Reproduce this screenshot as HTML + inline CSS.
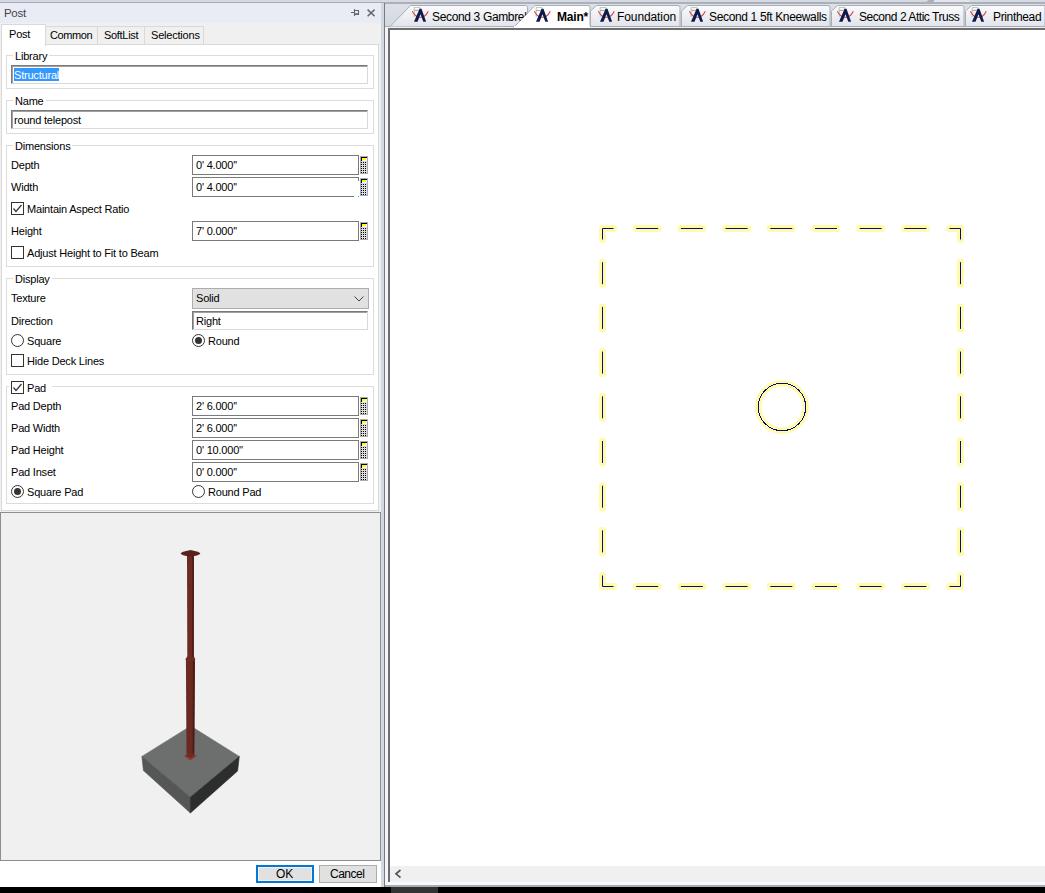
<!DOCTYPE html>
<html><head><meta charset="utf-8">
<style>
*{box-sizing:border-box;margin:0;padding:0}
html,body{width:1045px;height:893px;overflow:hidden;background:#D5D9E2;font-family:"Liberation Sans",sans-serif;font-size:11px;letter-spacing:-0.2px;color:#000}
.a{position:absolute}
.lbl{position:absolute;white-space:nowrap;line-height:15px}
.grp{position:absolute;border:1px solid #DCDCDC}
.gt{position:absolute;background:#fff;padding:0 2px 0 2px;line-height:15px;white-space:nowrap}
.inp{position:absolute;background:#fff;border:1px solid #7A7A7A;border-right-color:#D9D9D9;border-bottom-color:#D9D9D9;box-shadow:inset 1px 1px 0 #A0A0A0}
.inp2{position:absolute;background:#fff;border:1px solid #7A7A7A}
.txt{position:absolute;white-space:nowrap;line-height:15px}
.chk{position:absolute;width:13px;height:13px;border:1px solid #333;background:#fff}
.rad{position:absolute;width:13px;height:13px;border:1px solid #333;border-radius:50%;background:#fff}
.calc{position:absolute;width:8px;height:18px}
.tab{position:absolute;font-size:12px;letter-spacing:-0.35px;white-space:nowrap;line-height:14px}
</style></head><body>
<svg width="0" height="0" style="position:absolute"><defs><symbol id="calc" viewBox="0 0 8 18" width="8" height="18">
<rect x="0.5" y="0.5" width="7" height="17" fill="#DCDCDC" stroke="#ABABAB"/>
<rect x="1" y="1" width="6" height="1" fill="#000"/><rect x="1" y="1" width="1" height="4" fill="#000"/>
<rect x="2" y="2" width="4" height="2" fill="#FFFF00"/><rect x="6" y="2" width="1" height="3" fill="#F4F4F4"/><rect x="2" y="4" width="4" height="1" fill="#F4F4F4"/>
<g fill="#000"><rect x="1" y="6" width="1" height="1"/><rect x="3" y="6" width="1" height="1"/><rect x="5" y="6" width="1" height="1"/>
<rect x="1" y="8" width="1" height="1"/><rect x="3" y="8" width="1" height="1"/><rect x="5" y="8" width="1" height="1"/>
<rect x="1" y="10" width="1" height="1"/><rect x="3" y="10" width="1" height="1"/><rect x="5" y="10" width="1" height="1"/>
<rect x="1" y="12" width="1" height="1"/><rect x="3" y="12" width="1" height="1"/><rect x="5" y="12" width="1" height="1"/>
<rect x="1" y="14" width="1" height="1"/><rect x="3" y="14" width="1" height="1"/><rect x="5" y="14" width="1" height="1"/>
<rect x="1" y="16" width="1" height="1"/><rect x="3" y="16" width="1" height="1"/><rect x="5" y="16" width="1" height="1"/></g>
</symbol></defs></svg>
<!-- top strip -->
<div class="a" style="left:0;top:2px;width:1045px;height:1px;background:#A8ACB5"></div>

<svg class="a" style="left:920px;top:0" width="60" height="3"><polygon points="5,3 9,0 15,0 12,3" fill="#A9ADB5"/><rect x="14" y="0" width="36" height="2" fill="#E2E5EB"/></svg>
<!-- LEFT PANEL -->
<div class="a" style="left:0;top:3px;width:381px;height:20px;background:#E9ECF5"></div>
<div class="lbl" style="left:4px;top:6px;font-size:11.5px;letter-spacing:-0.3px;color:#444;line-height:15px">Post</div>
<!-- pin & close -->
<svg class="a" style="left:348px;top:7px" width="30" height="12" viewBox="0 0 30 12">
  <g stroke="#666" stroke-width="1.2" fill="none">
    <path d="M3 5.5 H6.5 M6.5 2 V9 M6.5 3.5 H10.5 V7.5 H6.5 M6.5 6.8 H10.5" stroke-width="1.1"/>
    <path d="M19.6 2.6 L26.6 9.2 M26.6 2.6 L19.6 9.2" stroke-width="1.5"/>
  </g>
</svg>
<div class="a" style="left:0;top:23px;width:381px;height:489px;background:#F0F0F0"></div>

<!-- property tabs -->
<div class="a" style="left:45px;top:26px;width:53px;height:19px;background:#F0F0F0;border:1px solid #D9D9D9"></div>
<div class="a" style="left:97px;top:26px;width:48px;height:19px;background:#F0F0F0;border:1px solid #D9D9D9"></div>
<div class="a" style="left:144px;top:26px;width:60px;height:19px;background:#F0F0F0;border:1px solid #D9D9D9"></div>
<div class="a" style="left:1px;top:44px;width:378px;height:467px;background:#fff;border:1px solid #D9D9D9"></div>
<div class="a" style="left:1px;top:24px;width:45px;height:22px;background:#fff;border:1px solid #D9D9D9;border-bottom:none"></div>
<div class="lbl" style="left:9px;top:27px">Post</div>
<div class="lbl" style="left:50px;top:28px;letter-spacing:-0.4px">Common</div>
<div class="lbl" style="left:104px;top:28px;letter-spacing:-0.3px">SoftList</div>
<div class="lbl" style="left:151px;top:28px">Selections</div>

<!-- Library -->
<div class="grp" style="left:6px;top:55px;width:368px;height:34px"></div>
<div class="gt" style="left:13px;top:49px">Library</div>
<div class="inp" style="left:11px;top:65px;width:357px;height:19px"></div>
<div class="a" style="left:14px;top:68px;width:45px;height:13px;background:#3399FF"></div>
<div class="txt" style="left:14px;top:68px;color:#fff">Structural</div>

<!-- Name -->
<div class="grp" style="left:6px;top:100px;width:368px;height:34px"></div>
<div class="gt" style="left:13px;top:94px">Name</div>
<div class="inp" style="left:11px;top:110px;width:357px;height:19px"></div>
<div class="txt" style="left:14px;top:113px">round telepost</div>

<!-- Dimensions -->
<div class="grp" style="left:6px;top:145px;width:368px;height:122px"></div>
<div class="gt" style="left:13px;top:139px">Dimensions</div>
<div class="lbl" style="left:11px;top:158px">Depth</div>
<div class="inp2" style="left:192px;top:155px;width:167px;height:20px"></div>
<div class="txt" style="left:196px;top:158px">0' 4.000''</div>
<div class="lbl" style="left:11px;top:180px">Width</div>
<div class="inp2" style="left:192px;top:177px;width:167px;height:20px"></div>
<div class="txt" style="left:196px;top:180px">0' 4.000''</div>
<div class="chk" style="left:11px;top:202px"></div>
<svg class="a" style="left:11px;top:202px" width="13" height="13"><path d="M2.5 6.5 L5 9.5 L10.5 3" stroke="#333" stroke-width="1.2" fill="none"/></svg>
<div class="lbl" style="left:27px;top:202px">Maintain Aspect Ratio</div>
<div class="lbl" style="left:11px;top:224px">Height</div>
<div class="inp2" style="left:192px;top:221px;width:167px;height:20px"></div>
<div class="txt" style="left:196px;top:224px">7' 0.000''</div>
<div class="chk" style="left:11px;top:246px"></div>
<div class="lbl" style="left:27px;top:246px">Adjust Height to Fit to Beam</div>

<!-- Display -->
<div class="grp" style="left:6px;top:278px;width:368px;height:97px"></div>
<div class="gt" style="left:13px;top:272px">Display</div>
<div class="lbl" style="left:11px;top:291px">Texture</div>
<div class="a" style="left:192px;top:288px;width:177px;height:21px;background:#E1E1E1;border:1px solid #ADADAD"></div>
<div class="txt" style="left:196px;top:291px">Solid</div>
<svg class="a" style="left:354px;top:296px" width="10" height="6"><path d="M0.5 0.5 L5 5 L9.5 0.5" stroke="#444" fill="none"/></svg>
<div class="lbl" style="left:11px;top:314px">Direction</div>
<div class="inp" style="left:192px;top:311px;width:176px;height:19px"></div>
<div class="txt" style="left:196px;top:314px">Right</div>
<div class="rad" style="left:11px;top:334px"></div>
<div class="lbl" style="left:27px;top:334px">Square</div>
<div class="rad" style="left:192px;top:334px"></div>
<div class="a" style="left:195px;top:337px;width:7px;height:7px;border-radius:50%;background:#333"></div>
<div class="lbl" style="left:208px;top:334px">Round</div>
<div class="chk" style="left:11px;top:354px"></div>
<div class="lbl" style="left:27px;top:354px">Hide Deck Lines</div>

<!-- Pad -->
<div class="grp" style="left:6px;top:386px;width:368px;height:118px"></div>
<div class="gt" style="left:9px;top:380px;width:43px;height:14px"></div>
<div class="chk" style="left:11px;top:381px"></div>
<svg class="a" style="left:11px;top:381px" width="13" height="13"><path d="M2.5 6.5 L5 9.5 L10.5 3" stroke="#333" stroke-width="1.2" fill="none"/></svg>
<div class="lbl" style="left:27px;top:381px">Pad</div>
<div class="lbl" style="left:11px;top:399px">Pad Depth</div>
<div class="inp2" style="left:192px;top:396px;width:167px;height:20px"></div>
<div class="txt" style="left:196px;top:399px">2' 6.000''</div>
<div class="lbl" style="left:11px;top:421px">Pad Width</div>
<div class="inp2" style="left:192px;top:418px;width:167px;height:20px"></div>
<div class="txt" style="left:196px;top:421px">2' 6.000''</div>
<div class="lbl" style="left:11px;top:443px">Pad Height</div>
<div class="inp2" style="left:192px;top:440px;width:167px;height:20px"></div>
<div class="txt" style="left:196px;top:443px">0' 10.000''</div>
<div class="lbl" style="left:11px;top:465px">Pad Inset</div>
<div class="inp2" style="left:192px;top:462px;width:167px;height:20px"></div>
<div class="txt" style="left:196px;top:465px">0' 0.000''</div>
<div class="rad" style="left:11px;top:485px"></div>
<div class="a" style="left:14px;top:488px;width:7px;height:7px;border-radius:50%;background:#333"></div>
<div class="lbl" style="left:27px;top:485px">Square Pad</div>
<div class="rad" style="left:192px;top:485px"></div>
<div class="lbl" style="left:208px;top:485px">Round Pad</div>

<svg class="a" style="left:360px;top:156px" width="8" height="18"><use href="#calc"/></svg>
<svg class="a" style="left:360px;top:178px" width="8" height="18"><use href="#calc"/></svg>
<div class="a" style="left:358px;top:181px;width:1px;height:15px;background:#fff"></div>
<div class="a" style="left:354px;top:196px;width:4px;height:1px;background:#fff"></div>
<svg class="a" style="left:360px;top:178px" width="8" height="18"><rect x="0.5" y="0.5" width="7" height="17" fill="none" stroke="#9DB0C4"/></svg>
<svg class="a" style="left:360px;top:222px" width="8" height="18"><use href="#calc"/></svg>
<svg class="a" style="left:360px;top:397px" width="8" height="18"><use href="#calc"/></svg>
<svg class="a" style="left:360px;top:419px" width="8" height="18"><use href="#calc"/></svg>
<svg class="a" style="left:360px;top:441px" width="8" height="18"><use href="#calc"/></svg>
<svg class="a" style="left:360px;top:463px" width="8" height="18"><use href="#calc"/></svg>
<!-- preview -->
<div class="a" style="left:0;top:512px;width:381px;height:349px;background:#F0F0F0;border:1px solid #8E8E8E"></div>
<svg class="a" style="left:0;top:500px" width="380" height="360" viewBox="0 500 380 360">
  <polygon points="190.7,726 239.3,756.4 190.4,797.2 141.9,756.4" fill="#6D6E6E" stroke="#6D6E6E" stroke-width="0.6"/>
  <polygon points="141.9,756.4 190.4,797.2 190.4,813 143.4,770.5" fill="#555656" stroke="#555656" stroke-width="0.6"/>
  <polygon points="190.4,797.2 239.3,756.4 237.6,771 190.4,813" fill="#2C2D2D" stroke="#2C2D2D" stroke-width="0.6"/>
  <!-- lower tube -->
  <polygon points="185.9,658 194.9,658 194.2,755.5 186.5,755.5" fill="#6A2921"/>
  <polygon points="192.9,658 194.9,658 194.2,755.5 192.6,755.5" fill="#4B1C17"/>
  <polygon points="185.6,659.5 187,656.5 194,656.5 195.2,659.5 194.6,661 186.2,661" fill="#6E2B23"/>
  <!-- upper tube -->
  <polygon points="187,555 193.9,555 193.8,657 187.3,657" fill="#6C2A22"/>
  <polygon points="192.2,555 193.9,555 193.8,657 192.2,657" fill="#4C1D18"/>
  <!-- top plate -->
  <path d="M180.6 553.6 Q180.8 552 190.5 550.1 Q200.2 552 200.3 553.6 Q200 555.3 190.5 556.8 Q181 555.3 180.6 553.6 Z" fill="#5A221B"/>
  <!-- base plate -->
  <polygon points="184,756 187,754.3 194,754.3 196.7,756 190.3,760.6" fill="#8B3B30"/>
  <polygon points="186.5,754.5 194.2,754.5 194.2,756 190.3,758 186.5,756" fill="#6A2921"/>
</svg>
<div class="a" style="left:0;top:861px;width:381px;height:26px;background:#fff"></div>
<div class="a" style="left:256px;top:865px;width:58px;height:18px;background:#E1E1E1;border:2px solid #0078D7;box-shadow:inset 0 0 0 1px #F5F0EC"></div>
<div class="tab" style="left:276px;top:867px;letter-spacing:0">OK</div>
<div class="a" style="left:319px;top:865px;width:58px;height:18px;background:#E1E1E1;border:1px solid #ADADAD"></div>
<div class="tab" style="left:330px;top:867px;letter-spacing:-0.5px">Cancel</div>

<!-- splitter -->
<div class="a" style="left:381px;top:3px;width:3px;height:884px;background:#D3D7E0"></div>
<div class="a" style="left:384px;top:3px;width:1px;height:884px;background:#7A7A7A"></div>
<div class="a" style="left:385px;top:3px;width:3px;height:884px;background:#F2F5FC"></div>

<!-- RIGHT DOC -->
<div class="a" style="left:388px;top:28px;width:657px;height:858px;background:#fff;border-left:2px solid #6E6E6E;border-top:2px solid #6E6E6E"></div>
<div class="a" style="left:390px;top:866px;width:655px;height:16px;background:#F0F0F0"></div>
<svg class="a" style="left:394px;top:869px" width="9" height="10"><path d="M6.5 1 L2 4.8 L6.5 8.6" stroke="#555" stroke-width="1.7" fill="none"/></svg>
<div class="a" style="left:388px;top:882px;width:657px;height:3px;background:#F8F9FC"></div>
<div class="a" style="left:385px;top:885px;width:660px;height:2px;background:#A8ACB5"></div>

<!-- TAB STRIP -->
<svg class="a" style="left:0;top:0" width="1045" height="30" viewBox="0 0 1045 30">
  <defs>
    <linearGradient id="tg" x1="0" y1="0" x2="0" y2="1">
      <stop offset="0" stop-color="#FBFBFC"/>
      <stop offset="1" stop-color="#E1E4EB"/>
    </linearGradient>
    <symbol id="ic" viewBox="0 0 18 16" width="18" height="16">
      <path d="M2.2 10 V0.4 H7.9 V3" fill="none" stroke="#A3CBA3" stroke-width="0.9"/>
      <path d="M2.4 3.4 H7.5" stroke="#D98088" stroke-width="0.9"/>
      <path d="M0.3 4.2 Q2 8 5.2 9.8 M16.3 4.2 Q14.6 8 11.6 9.8 M5.2 10.3 H11.6" stroke="#D84550" stroke-width="1.1" fill="none"/>
      <path d="M2 14.8 L7.6 1.7 L9.5 1.7 L14.1 14.8 L11.3 14.8 L8.5 7.2 L5.5 14.8 Z" fill="#0D1A4C"/>
    </symbol>
  </defs>
  <linearGradient id="sg" x1="0" y1="0" x2="0" y2="1"><stop offset="0" stop-color="#DDE0E8"/><stop offset="1" stop-color="#D4D8E1"/></linearGradient>
  <rect x="385" y="3" width="660" height="24" fill="url(#sg)"/>
  <rect x="385" y="2" width="660" height="2" fill="#ACB0B9"/>
  <rect x="385" y="26" width="660" height="1" fill="#A9ADB5"/>
  <rect x="388" y="27" width="657" height="1" fill="#EEF0F4"/>
  <!-- inactive tabs (right to left) -->
  <path d="M965.5 26 V11 L971.5 5.5 H1045 V26" fill="url(#tg)" stroke="#A9ADB5"/>
  <path d="M831.5 26 V11 L837.5 5.5 H962 Q964 5.5 964 7.5 V26" fill="url(#tg)" stroke="#A9ADB5"/>
  <path d="M681.5 26 V11 L687.5 5.5 H828 Q830 5.5 830 7.5 V26" fill="url(#tg)" stroke="#A9ADB5"/>
  <path d="M590.5 26 V11 L596.5 5.5 H678 Q680 5.5 680 7.5 V26" fill="url(#tg)" stroke="#A9ADB5"/>
  <path d="M390 26.5 L410.5 5.5 H525.5 Q527.5 5.5 527.5 7.5 V26" fill="url(#tg)" stroke="#A9ADB5"/>
  <!-- selected -->
  <path d="M513.5 27.5 L535 5.5 H588 Q590 5.5 590 7.5 V27.5" fill="#fff" stroke="#A9ADB5"/>
  <rect x="514" y="26" width="76" height="2" fill="#fff"/>
  <use href="#ic" x="412" y="7"/>
  <use href="#ic" x="534" y="7"/>
  <use href="#ic" x="598" y="7"/>
  <use href="#ic" x="689" y="7"/>
  <use href="#ic" x="837" y="7"/>
  <use href="#ic" x="970" y="7"/>
</svg>
<div class="tab" style="left:432px;top:10px;width:110px;height:16px;clip-path:polygon(0 0,99px 0,83px 16px,0 16px)">Second 3 Gambrel</div>
<div class="tab" style="left:557px;top:10px;font-weight:bold;letter-spacing:-0.2px">Main*</div>
<div class="tab" style="left:617px;top:10px;letter-spacing:-0.1px">Foundation</div>
<div class="tab" style="left:709px;top:10px">Second 1 5ft Kneewalls</div>
<div class="tab" style="left:859px;top:10px;letter-spacing:-0.45px">Second 2 Attic Truss</div>
<div class="tab" style="left:993px;top:10px">Printhead</div>

<!-- DRAWING -->
<svg class="a" style="left:590px;top:215px" width="385" height="385" viewBox="590 215 385 385">
  <g fill="none" stroke-linecap="round" stroke-linejoin="round">
    <g stroke="#FFFBA8" stroke-width="7">
      <path d="M602.5 239.5 V228.5 H613.5 M949.5 228.5 H960.5 V239.5 M960.5 575.5 V586.5 H949.5 M613.5 586.5 H602.5 V575.5 M636.2 228.5 H658.2 M636.2 586.5 H658.2 M602.5 262.2 V284.2 M960.5 262.2 V284.2 M680.9 228.5 H702.9 M680.9 586.5 H702.9 M602.5 306.9 V328.9 M960.5 306.9 V328.9 M725.6 228.5 H747.6 M725.6 586.5 H747.6 M602.5 351.6 V373.6 M960.5 351.6 V373.6 M770.3 228.5 H792.3 M770.3 586.5 H792.3 M602.5 396.3 V418.3 M960.5 396.3 V418.3 M815.0 228.5 H837.0 M815.0 586.5 H837.0 M602.5 441.0 V463.0 M960.5 441.0 V463.0 M859.7 228.5 H881.7 M859.7 586.5 H881.7 M602.5 485.7 V507.7 M960.5 485.7 V507.7 M904.4 228.5 H926.4 M904.4 586.5 H926.4 M602.5 530.4 V552.4 M960.5 530.4 V552.4"/>
      <circle cx="782" cy="407" r="23.7" stroke-width="6.5"/>
    </g>
    <g stroke="#0A0A80" stroke-width="1" stroke-linecap="butt" stroke-linejoin="miter">
      <path d="M602.5 239.5 V228.5 H613.5 M949.5 228.5 H960.5 V239.5 M960.5 575.5 V586.5 H949.5 M613.5 586.5 H602.5 V575.5 M636.2 228.5 H658.2 M636.2 586.5 H658.2 M602.5 262.2 V284.2 M960.5 262.2 V284.2 M680.9 228.5 H702.9 M680.9 586.5 H702.9 M602.5 306.9 V328.9 M960.5 306.9 V328.9 M725.6 228.5 H747.6 M725.6 586.5 H747.6 M602.5 351.6 V373.6 M960.5 351.6 V373.6 M770.3 228.5 H792.3 M770.3 586.5 H792.3 M602.5 396.3 V418.3 M960.5 396.3 V418.3 M815.0 228.5 H837.0 M815.0 586.5 H837.0 M602.5 441.0 V463.0 M960.5 441.0 V463.0 M859.7 228.5 H881.7 M859.7 586.5 H881.7 M602.5 485.7 V507.7 M960.5 485.7 V507.7 M904.4 228.5 H926.4 M904.4 586.5 H926.4 M602.5 530.4 V552.4 M960.5 530.4 V552.4"/>
      <circle cx="782" cy="407" r="23.7" shape-rendering="crispEdges"/>
    </g>
  </g>
</svg>

<!-- bottom black -->
<div class="a" style="left:0;top:887px;width:1045px;height:6px;background:#000"></div>
<div class="a" style="left:391px;top:887px;width:47px;height:6px;background:#333"></div>
</body></html>
